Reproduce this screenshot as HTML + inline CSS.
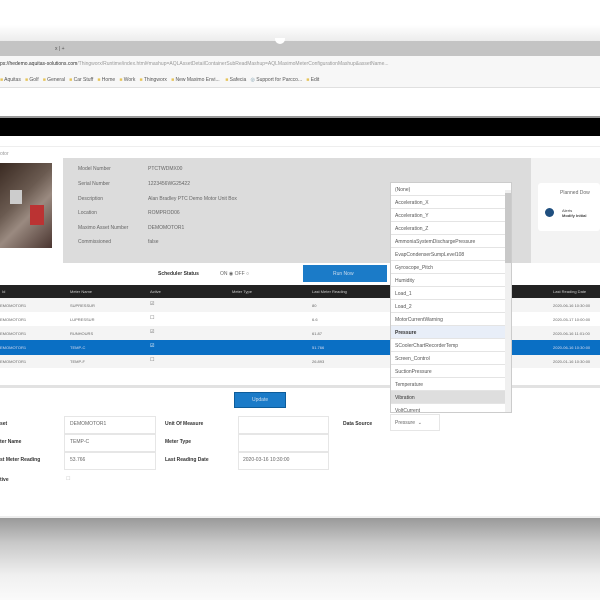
<!DOCTYPE html>
<html><head><meta charset="utf-8"><style>
*{margin:0;padding:0;box-sizing:border-box}
body{width:600px;height:600px;overflow:hidden;background:#fff;font-family:"Liberation Sans",sans-serif;position:relative;color:#555}
.a{position:absolute}
.t{position:absolute;font-size:5px;white-space:nowrap;color:#666}
.dd div{height:13px;border-bottom:1px solid #e4e4e4;font-size:5px;padding:4px 0 0 4px;color:#555}
</style></head><body>
<div class="a" style="left:0;top:0;width:600px;height:41px;background:linear-gradient(#fff,#fff 60%,#ececec)"></div>
<div class="a" style="left:0;top:41px;width:600px;height:15px;background:#c4c4c4"></div>
<div class="a" style="left:275px;top:38px;width:10px;height:6px;border-radius:0 0 5px 5px;background:#fff"></div>
<div class="t" style="left:55px;top:46px;color:#555">x | +</div>
<div class="a" style="left:0;top:56px;width:600px;height:16px;background:#f7f7f7"></div>
<div class="t" style="left:0;top:61px;color:#333">ps://hedemo.aquitas-solutions.com<span style="color:#999">/Thingworx/Runtime/index.html#mashup=AQLAssetDetailContainerSubReadMashup=AQLMaximoMeterConfigurationMashup&amp;assetName...</span></div>
<div class="a" style="left:0;top:72px;width:600px;height:16px;background:#f7f7f7;border-bottom:1px solid #e0e0e0"></div>
<div class="t" style="left:0;top:77px;color:#555">
<span style="color:#e6c45a">■</span> Aquitas &nbsp; <span style="color:#e6c45a">■</span> Golf &nbsp; <span style="color:#e6c45a">■</span> General &nbsp; <span style="color:#e6c45a">■</span> Car Stuff &nbsp; <span style="color:#e6c45a">■</span> Home &nbsp; <span style="color:#e6c45a">■</span> Work &nbsp; <span style="color:#e6c45a">■</span> Thingworx &nbsp; <span style="color:#e6c45a">■</span> New Maximo Envi... &nbsp;&nbsp; <span style="color:#e6c45a">■</span> Safecia &nbsp; <span style="color:#79a">◎</span> Support for Parcco... &nbsp; <span style="color:#e6c45a">■</span> Edit</div>
<div class="a" style="left:0;top:116px;width:600px;height:2px;background:#999"></div>
<div class="a" style="left:0;top:118px;width:600px;height:18px;background:#000"></div>
<div class="a" style="left:0;top:146px;width:600px;height:1px;background:#eee"></div>
<div class="t" style="left:0;top:151px;color:#999">otor</div>
<div class="a" style="left:63px;top:158px;width:468px;height:105px;background:#dcdcdc"></div>
<div class="a" style="left:531px;top:158px;width:69px;height:105px;background:#f3f3f3"></div>
<div class="a" style="left:0;top:163px;width:52px;height:85px;background:linear-gradient(135deg,#3a2a22,#6a5a50 40%,#9a8a80 60%,#4a3530)"></div>
<div class="a" style="left:10px;top:190px;width:12px;height:14px;background:#ccc"></div>
<div class="a" style="left:30px;top:205px;width:14px;height:20px;background:#b33"></div>
<div class="t" style="left:78px;top:166px">Model Number</div><div class="t" style="left:148px;top:166px">PTCTWDMX00</div>
<div class="t" style="left:78px;top:181px">Serial Number</div><div class="t" style="left:148px;top:181px">1223456WG25422</div>
<div class="t" style="left:78px;top:196px">Description</div><div class="t" style="left:148px;top:196px">Alan Bradley PTC Demo Motor Unit Box</div>
<div class="t" style="left:78px;top:210px">Location</div><div class="t" style="left:148px;top:210px">ROMPROD06</div>
<div class="t" style="left:78px;top:225px">Maximo Asset Number</div><div class="t" style="left:148px;top:225px">DEMOMOTOR1</div>
<div class="t" style="left:78px;top:239px">Commissioned</div><div class="t" style="left:148px;top:239px">false</div>
<div class="a" style="left:538px;top:183px;width:62px;height:48px;background:#fff;border-radius:3px"></div>
<div class="t" style="left:560px;top:190px">Planned Dow</div>
<div class="a" style="left:545px;top:208px;width:9px;height:9px;border-radius:50%;background:#1f4f7f"></div>
<div class="t" style="left:562px;top:208px;font-size:4px;color:#444">Alerts<br><b>Modify Initial</b></div>
<div class="t" style="left:158px;top:271px;color:#333;font-weight:bold">Scheduler Status</div>
<div class="t" style="left:220px;top:271px">ON ◉ OFF ○</div>
<div class="a" style="left:303px;top:265px;width:84px;height:17px;background:#1b7bc8"></div>
<div class="t" style="left:333px;top:271px;color:#cde">Run Now</div>
<div class="a" style="left:0;top:285px;width:600px;height:13px;background:#222"></div>
<div class="t" style="left:2px;top:289px;color:#ccc;font-size:4px">Id</div>
<div class="t" style="left:70px;top:289px;color:#ccc;font-size:4px">Meter Name</div>
<div class="t" style="left:150px;top:289px;color:#ccc;font-size:4px">Active</div>
<div class="t" style="left:232px;top:289px;color:#ccc;font-size:4px">Meter Type</div>
<div class="t" style="left:312px;top:289px;color:#ccc;font-size:4px">Last Meter Reading</div>
<div class="t" style="left:553px;top:289px;color:#ccc;font-size:4px">Last Reading Date</div>
<div class="a" style="left:0;top:298px;width:600px;height:14px;background:#f4f4f4"></div>
<div class="a" style="left:0;top:326px;width:600px;height:14px;background:#f4f4f4"></div>
<div class="a" style="left:0;top:340px;width:600px;height:15px;background:#0a6fc4"></div>
<div class="a" style="left:0;top:355px;width:600px;height:13px;background:#f4f4f4"></div>
<div class="t" style="left:0;top:303px;font-size:4px">EMOMOTOR1</div><div class="t" style="left:70px;top:303px;font-size:4px">SUPRESSUR</div><div class="t" style="left:150px;top:301px">☑</div><div class="t" style="left:312px;top:303px;font-size:4px">80</div><div class="t" style="left:553px;top:303px;font-size:4px">2020-06-16 10:30:00</div>
<div class="t" style="left:0;top:317px;font-size:4px">EMOMOTOR1</div><div class="t" style="left:70px;top:317px;font-size:4px">LUPRESSUR</div><div class="t" style="left:150px;top:315px">☐</div><div class="t" style="left:312px;top:317px;font-size:4px">6.6</div><div class="t" style="left:553px;top:317px;font-size:4px">2020-05-17 10:00:00</div>
<div class="t" style="left:0;top:331px;font-size:4px">EMOMOTOR1</div><div class="t" style="left:70px;top:331px;font-size:4px">RUNHOURS</div><div class="t" style="left:150px;top:329px">☑</div><div class="t" style="left:312px;top:331px;font-size:4px">61.87</div><div class="t" style="left:553px;top:331px;font-size:4px">2020-06-16 11:01:00</div>
<div class="t" style="left:0;top:345px;font-size:4px;color:#dde">EMOMOTOR1</div><div class="t" style="left:70px;top:345px;font-size:4px;color:#dde">TEMP-C</div><div class="t" style="left:150px;top:343px;color:#fff">☑</div><div class="t" style="left:312px;top:345px;font-size:4px;color:#dde">51.766</div><div class="t" style="left:553px;top:345px;font-size:4px;color:#dde">2020-06-16 10:30:00</div>
<div class="t" style="left:0;top:359px;font-size:4px">EMOMOTOR1</div><div class="t" style="left:70px;top:359px;font-size:4px">TEMP-F</div><div class="t" style="left:150px;top:357px">☐</div><div class="t" style="left:312px;top:359px;font-size:4px">26.893</div><div class="t" style="left:553px;top:359px;font-size:4px">2020-01-16 10:30:00</div>
<div class="a" style="left:0;top:385px;width:600px;height:3px;background:#e2e2e2"></div>
<div class="a" style="left:234px;top:392px;width:52px;height:16px;background:#1b7bc8;border:1px solid #0d5c9a"></div>
<div class="t" style="left:252px;top:397px;color:#cde">Update</div>
<div class="t" style="left:0;top:421px;color:#333;font-weight:bold">set</div>
<div class="t" style="left:0;top:439px;color:#333;font-weight:bold">ter Name</div>
<div class="t" style="left:0;top:457px;color:#333;font-weight:bold">st Meter Reading</div>
<div class="t" style="left:0;top:477px;color:#333;font-weight:bold">tive</div>
<div class="a" style="left:64px;top:416px;width:92px;height:18px;border:1px solid #e6e6e6"></div>
<div class="a" style="left:64px;top:434px;width:92px;height:18px;border:1px solid #e6e6e6"></div>
<div class="a" style="left:64px;top:452px;width:92px;height:18px;border:1px solid #e6e6e6"></div>
<div class="t" style="left:70px;top:421px">DEMOMOTOR1</div><div class="t" style="left:70px;top:439px">TEMP-C</div><div class="t" style="left:70px;top:457px">53.766</div>
<div class="t" style="left:66px;top:476px;color:#bbb">☐</div>
<div class="t" style="left:165px;top:421px;color:#333;font-weight:bold">Unit Of Measure</div>
<div class="t" style="left:165px;top:439px;color:#333;font-weight:bold">Meter Type</div>
<div class="t" style="left:165px;top:457px;color:#333;font-weight:bold">Last Reading Date</div>
<div class="a" style="left:238px;top:416px;width:91px;height:18px;border:1px solid #e6e6e6"></div>
<div class="a" style="left:238px;top:434px;width:91px;height:18px;border:1px solid #e6e6e6"></div>
<div class="a" style="left:238px;top:452px;width:91px;height:18px;border:1px solid #e6e6e6"></div>
<div class="t" style="left:243px;top:457px">2020-03-16 10:30:00</div>
<div class="t" style="left:343px;top:421px;color:#333;font-weight:bold">Data Source</div>
<div class="a" style="left:390px;top:414px;width:50px;height:17px;border:1px solid #e6e6e6"></div>
<div class="t" style="left:395px;top:420px">Pressure &nbsp;⌄</div>
<div class="a dd" style="left:390px;top:182px;width:122px;height:231px;background:#fff;border:1px solid #ccc;overflow:hidden">
<div>(None)</div><div>Acceleration_X</div><div>Acceleration_Y</div><div>Acceleration_Z</div><div>AmmoniaSystemDischargePressure</div><div>EvapCondenserSumpLevel108</div><div>Gyroscope_Pitch</div><div>Humidity</div><div>Load_1</div><div>Load_2</div><div>MotorCurrentWarning</div><div style="background:#e8eef8;font-weight:bold;color:#333">Pressure</div><div>SCoolerChartRecorderTemp</div><div>Screen_Control</div><div>SuctionPressure</div><div>Temperature</div><div style="background:#dedede;color:#333">Vibration</div><div>VoltCurrent</div>
</div>
<div class="a" style="left:505px;top:190px;width:6px;height:222px;background:#f0f0f0"></div>
<div class="a" style="left:505px;top:193px;width:6px;height:70px;background:#c8c8c8"></div>
<div class="a" style="left:0;top:516px;width:600px;height:2px;background:#eee"></div>
<div class="a" style="left:0;top:518px;width:600px;height:82px;background:linear-gradient(#999,#c8c8c8 30%,#f0f0f0 70%,#fafafa)"></div>
</body></html>
